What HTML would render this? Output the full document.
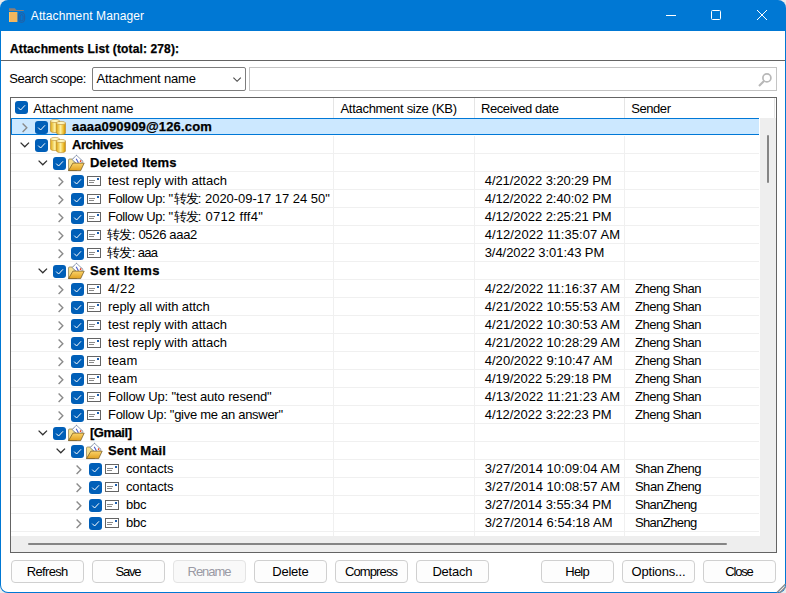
<!DOCTYPE html>
<html><head><meta charset="utf-8"><title>Attachment Manager</title>
<style>
html,body{margin:0;padding:0;width:786px;height:593px;overflow:hidden;background:#ebebeb;}
#root{position:relative;width:786px;height:593px;}
svg text{font-family:"Liberation Sans",sans-serif;}
</style></head><body><div id="root">
<div style="position:absolute;left:0;top:0;width:786px;height:593px;background:#0078d4;border-radius:8px;overflow:hidden"><div style="position:absolute;left:1px;top:31px;width:784px;height:561px;background:#fff;border-radius:0 0 7px 7px"></div></div>
<div style="position:absolute;left:11px;top:560px;width:71px;height:21px;border:1px solid #d0d0d0;border-radius:4px;background:#fdfdfd;"></div>
<div style="position:absolute;left:92px;top:560px;width:71px;height:21px;border:1px solid #d0d0d0;border-radius:4px;background:#fdfdfd;"></div>
<div style="position:absolute;left:173px;top:560px;width:71px;height:21px;border:1px solid #d0d0d0;border-radius:4px;background:#fdfdfd;background:#f9f9f9;border-color:#e4e4e4;"></div>
<div style="position:absolute;left:254px;top:560px;width:71px;height:21px;border:1px solid #d0d0d0;border-radius:4px;background:#fdfdfd;"></div>
<div style="position:absolute;left:335px;top:560px;width:71px;height:21px;border:1px solid #d0d0d0;border-radius:4px;background:#fdfdfd;"></div>
<div style="position:absolute;left:416px;top:560px;width:71px;height:21px;border:1px solid #d0d0d0;border-radius:4px;background:#fdfdfd;"></div>
<div style="position:absolute;left:541px;top:560px;width:71px;height:21px;border:1px solid #d0d0d0;border-radius:4px;background:#fdfdfd;"></div>
<div style="position:absolute;left:622px;top:560px;width:71px;height:21px;border:1px solid #d0d0d0;border-radius:4px;background:#fdfdfd;"></div>
<div style="position:absolute;left:703px;top:560px;width:71px;height:21px;border:1px solid #d0d0d0;border-radius:4px;background:#fdfdfd;"></div>
<div style="position:absolute;left:1px;top:60px;width:784px;height:1px;background:#646464"></div>
<div style="position:absolute;left:92px;top:67px;width:152px;height:22px;border:1px solid #7d7d7d;border-radius:2px;background:#fff"></div>
<div style="position:absolute;left:249px;top:67px;width:526px;height:22px;border:1px solid #c4c4c4;background:#fff"></div>
<div style="position:absolute;left:10px;top:97px;width:765px;height:454px;border:1px solid #646464;background:#fff"></div>
<div style="position:absolute;left:333px;top:98px;width:1px;height:20px;background:#e5e5e5"></div>
<div style="position:absolute;left:474px;top:98px;width:1px;height:20px;background:#e5e5e5"></div>
<div style="position:absolute;left:624px;top:98px;width:1px;height:20px;background:#e5e5e5"></div>
<div style="position:absolute;left:774px;top:98px;width:1px;height:20px;background:#e5e5e5"></div>
<div style="position:absolute;left:11px;top:153px;width:748px;height:1px;background:#f0f0f0"></div>
<div style="position:absolute;left:11px;top:171px;width:748px;height:1px;background:#f0f0f0"></div>
<div style="position:absolute;left:11px;top:189px;width:748px;height:1px;background:#f0f0f0"></div>
<div style="position:absolute;left:11px;top:207px;width:748px;height:1px;background:#f0f0f0"></div>
<div style="position:absolute;left:11px;top:225px;width:748px;height:1px;background:#f0f0f0"></div>
<div style="position:absolute;left:11px;top:243px;width:748px;height:1px;background:#f0f0f0"></div>
<div style="position:absolute;left:11px;top:261px;width:748px;height:1px;background:#f0f0f0"></div>
<div style="position:absolute;left:11px;top:279px;width:748px;height:1px;background:#f0f0f0"></div>
<div style="position:absolute;left:11px;top:297px;width:748px;height:1px;background:#f0f0f0"></div>
<div style="position:absolute;left:11px;top:315px;width:748px;height:1px;background:#f0f0f0"></div>
<div style="position:absolute;left:11px;top:333px;width:748px;height:1px;background:#f0f0f0"></div>
<div style="position:absolute;left:11px;top:351px;width:748px;height:1px;background:#f0f0f0"></div>
<div style="position:absolute;left:11px;top:369px;width:748px;height:1px;background:#f0f0f0"></div>
<div style="position:absolute;left:11px;top:387px;width:748px;height:1px;background:#f0f0f0"></div>
<div style="position:absolute;left:11px;top:405px;width:748px;height:1px;background:#f0f0f0"></div>
<div style="position:absolute;left:11px;top:423px;width:748px;height:1px;background:#f0f0f0"></div>
<div style="position:absolute;left:11px;top:441px;width:748px;height:1px;background:#f0f0f0"></div>
<div style="position:absolute;left:11px;top:459px;width:748px;height:1px;background:#f0f0f0"></div>
<div style="position:absolute;left:11px;top:477px;width:748px;height:1px;background:#f0f0f0"></div>
<div style="position:absolute;left:11px;top:495px;width:748px;height:1px;background:#f0f0f0"></div>
<div style="position:absolute;left:11px;top:513px;width:748px;height:1px;background:#f0f0f0"></div>
<div style="position:absolute;left:11px;top:531px;width:748px;height:1px;background:#f0f0f0"></div>
<div style="position:absolute;left:333px;top:136px;width:1px;height:400px;background:#f0f0f0"></div>
<div style="position:absolute;left:474px;top:136px;width:1px;height:400px;background:#f0f0f0"></div>
<div style="position:absolute;left:624px;top:136px;width:1px;height:400px;background:#f0f0f0"></div>
<div style="position:absolute;left:11px;top:118px;width:747px;height:15px;border:1px solid #0078d7;border-right:none;background:#cce8ff;border-radius:1px 0 0 1px"></div>
<div style="position:absolute;left:760px;top:118px;width:16px;height:418px;background:#eeeeee"></div>
<div style="position:absolute;left:767px;top:135px;width:2px;height:48px;background:#858585;border-radius:1px"></div>
<div style="position:absolute;left:11px;top:536px;width:765px;height:16px;background:#eeeeee"></div>
<div style="position:absolute;left:28px;top:543px;width:699px;height:2px;background:#858585;border-radius:1px"></div>
<svg width="786" height="593" viewBox="0 0 786 593" style="position:absolute;left:0;top:0">
<defs>
<symbol id="cb" viewBox="0 0 13 13" width="13" height="13" overflow="visible">
<rect x="0" y="0" width="13" height="13" rx="3" fill="#005fb8"/>
<path d="M3.2 6.6 L5.6 9 L10 4.3" fill="none" stroke="#fff" stroke-width="1"/>
</symbol>
<linearGradient id="gold" x1="0" x2="1" y1="0" y2="0">
<stop offset="0" stop-color="#e0a810"/><stop offset="0.45" stop-color="#fbeea0"/><stop offset="0.75" stop-color="#f0c030"/><stop offset="1" stop-color="#c88a00"/>
</linearGradient>
<symbol id="db" width="16" height="18" overflow="visible">
<g stroke="#b88a30" stroke-width="0.6">
<path d="M0.5 3 v10 a4.5 1.6 0 0 0 9 0 v-10 z" fill="url(#gold)"/>
<ellipse cx="5" cy="3" rx="4.5" ry="1.6" fill="#fff8c0"/>
<path d="M6.5 5 v10 a4.5 1.6 0 0 0 9 0 v-10 z" fill="url(#gold)"/>
<ellipse cx="11" cy="5" rx="4.5" ry="1.6" fill="#fff8c0"/>
</g>
</symbol>
<linearGradient id="fold" x1="0" x2="0" y1="0" y2="1">
<stop offset="0" stop-color="#fbd46a"/><stop offset="1" stop-color="#e0a020"/>
</linearGradient>
<symbol id="fo" width="18" height="18" overflow="visible">
<path d="M0.5 16.5 V6 q0 -1 1 -1 h3 l1 1 h3 v10.5 z" fill="#f6e08e" stroke="#8a7a50" stroke-width="0.7"/>
<path d="M8.4 1.2 L15.1 7.5 L10.8 11.9 L4.1 5.6 Z" fill="#fff" stroke="#2a4068" stroke-width="0.9" stroke-dasharray="1 0.6"/>
<path d="M8.2 4.8 L10.4 8.8" stroke="#4a5ac8" stroke-width="1.1"/>
<path d="M12 6.6 L13.2 7.6" stroke="#e83a18" stroke-width="1.4"/>
<path d="M4.9 9.1 H16.2 L12.7 16.6 H0.5 Z" fill="url(#fold)" stroke="#6a5020" stroke-width="0.7"/>
</symbol>
<symbol id="msg" width="14" height="10" overflow="visible">
<rect x="0.5" y="0.5" width="13" height="9" fill="#fff" stroke="#646464" stroke-width="1"/>
<path d="M2 4.5 h6 M2 6.5 h5" stroke="#8a8a8a" stroke-width="1"/>
<rect x="10" y="2" width="2" height="2" fill="#1f5fae"/>
</symbol>
</defs>
<text x="30.8" y="19.5" font-size="12" fill="#fff" textLength="113.3" lengthAdjust="spacing">Attachment Manager</text>
<g>
<path d="M9 8.2 h5.8 l1.6 1.8 h7.4 v1 h-14.8 z" fill="#8a7e76"/>
<rect x="9" y="12" width="8.4" height="10" fill="#f2b65e"/>
<rect x="9" y="12" width="1" height="10" fill="#ffc466"/>
<rect x="18.6" y="12.6" width="6" height="9.8" rx="3" fill="none" stroke="#2b5a98" stroke-width="0.9"/>
<rect x="20.1" y="14.6" width="3" height="6.2" rx="1.5" fill="none" stroke="#2b5a98" stroke-width="0.8"/>
</g>
<g stroke="#fff" stroke-width="1" fill="none"><path d="M666 15.5 h10"/><rect x="711.5" y="10.5" width="9" height="9" rx="1"/><path d="M757 10 l10 10 M767 10 l-10 10"/></g>
<text x="10" y="53" font-size="12" font-weight="bold" stroke="#000" stroke-width="0.25" textLength="169" lengthAdjust="spacing">Attachments List (total: 278):</text>
<text x="9.3" y="83" font-size="13" textLength="77" lengthAdjust="spacing">Search scope:</text>
<text x="96.5" y="83" font-size="13" textLength="99.5" lengthAdjust="spacing">Attachment name</text>
<path d="M233.4 77.6 l3.7 3.7 l3.7 -3.7" fill="none" stroke="#4a4a4a" stroke-width="1.15"/>
<g fill="none" stroke="#b8b8b8" stroke-width="1.7"><circle cx="766.9" cy="77.9" r="4"/><path d="M764 81 l-5 5" stroke-width="2.1"/></g>
<use href="#cb" x="15" y="101"/>
<text x="33.3" y="113" font-size="13" textLength="100.3" lengthAdjust="spacing">Attachment name</text>
<text x="340.5" y="113" font-size="13" textLength="116.5" lengthAdjust="spacing">Attachment size (KB)</text>
<text x="481" y="113" font-size="13" textLength="78" lengthAdjust="spacing">Received date</text>
<text x="631.3" y="113" font-size="13" textLength="39.7" lengthAdjust="spacing">Sender</text>
<path d="M22.6 123.6 l4.2 4.2 l-4.2 4.2" fill="none" stroke="#8a8a8a" stroke-width="1.4"/>
<use href="#cb" x="35" y="121"/>
<use href="#db" x="50" y="118"/>
<text x="72" y="131" font-size="13" font-weight="bold" stroke="#000" stroke-width="0.25" textLength="139.8" lengthAdjust="spacing">aaaa090909@126.com</text>
<path d="M20.6 142.6 l4.2 4.2 l4.2 -4.2" fill="none" stroke="#303030" stroke-width="1.3"/>
<use href="#cb" x="35" y="139"/>
<use href="#db" x="50" y="136"/>
<text x="72" y="149" font-size="13" font-weight="bold" stroke="#000" stroke-width="0.25" textLength="51.5" lengthAdjust="spacing">Archives</text>
<path d="M38.6 160.6 l4.2 4.2 l4.2 -4.2" fill="none" stroke="#303030" stroke-width="1.3"/>
<use href="#cb" x="53" y="157"/>
<use href="#fo" x="68" y="154"/>
<text x="90" y="167" font-size="13" font-weight="bold" stroke="#000" stroke-width="0.25" textLength="86.5" lengthAdjust="spacing">Deleted Items</text>
<path d="M58.6 177.6 l4.2 4.2 l-4.2 4.2" fill="none" stroke="#8a8a8a" stroke-width="1.4"/>
<use href="#cb" x="71" y="175"/>
<use href="#msg" x="87" y="176"/>
<text x="108" y="185" font-size="13" textLength="119" lengthAdjust="spacing">test reply with attach</text>
<text x="484.7" y="185" font-size="13" textLength="127.0" lengthAdjust="spacing">4/21/2022 3:20:29 PM</text>
<path d="M58.6 195.6 l4.2 4.2 l-4.2 4.2" fill="none" stroke="#8a8a8a" stroke-width="1.4"/>
<use href="#cb" x="71" y="193"/>
<use href="#msg" x="87" y="194"/>
<text x="108" y="203" font-size="13" textLength="65" lengthAdjust="spacing">Follow Up: "</text>
<text x="173.5" y="203" font-size="12.5" textLength="25" lengthAdjust="spacing">转发</text>
<text x="197.8" y="203" font-size="13" textLength="132" lengthAdjust="spacing">: 2020-09-17 17 24 50"</text>
<text x="484.7" y="203" font-size="13" textLength="127.0" lengthAdjust="spacing">4/12/2022 2:40:02 PM</text>
<path d="M58.6 213.6 l4.2 4.2 l-4.2 4.2" fill="none" stroke="#8a8a8a" stroke-width="1.4"/>
<use href="#cb" x="71" y="211"/>
<use href="#msg" x="87" y="212"/>
<text x="108" y="221" font-size="13" textLength="65" lengthAdjust="spacing">Follow Up: "</text>
<text x="173.5" y="221" font-size="12.5" textLength="25" lengthAdjust="spacing">转发</text>
<text x="197.8" y="221" font-size="13" textLength="65" lengthAdjust="spacing">: 0712 fff4"</text>
<text x="484.7" y="221" font-size="13" textLength="127.0" lengthAdjust="spacing">4/12/2022 2:25:21 PM</text>
<path d="M58.6 231.6 l4.2 4.2 l-4.2 4.2" fill="none" stroke="#8a8a8a" stroke-width="1.4"/>
<use href="#cb" x="71" y="229"/>
<use href="#msg" x="87" y="230"/>
<text x="107.4" y="239" font-size="12.5" textLength="25" lengthAdjust="spacing">转发</text>
<text x="131.8" y="239" font-size="13" textLength="65.5" lengthAdjust="spacing">: 0526 aaa2</text>
<text x="484.7" y="239" font-size="13" textLength="135.3" lengthAdjust="spacing">4/12/2022 11:35:07 AM</text>
<path d="M58.6 249.6 l4.2 4.2 l-4.2 4.2" fill="none" stroke="#8a8a8a" stroke-width="1.4"/>
<use href="#cb" x="71" y="247"/>
<use href="#msg" x="87" y="248"/>
<text x="107.4" y="257" font-size="12.5" textLength="25" lengthAdjust="spacing">转发</text>
<text x="131.8" y="257" font-size="13" textLength="26.3" lengthAdjust="spacing">: aaa</text>
<text x="484.7" y="257" font-size="13" textLength="119.6" lengthAdjust="spacing">3/4/2022 3:01:43 PM</text>
<path d="M38.6 268.6 l4.2 4.2 l4.2 -4.2" fill="none" stroke="#303030" stroke-width="1.3"/>
<use href="#cb" x="53" y="265"/>
<use href="#fo" x="68" y="262"/>
<text x="90" y="275" font-size="13" font-weight="bold" stroke="#000" stroke-width="0.25" textLength="69.4" lengthAdjust="spacing">Sent Items</text>
<path d="M58.6 285.6 l4.2 4.2 l-4.2 4.2" fill="none" stroke="#8a8a8a" stroke-width="1.4"/>
<use href="#cb" x="71" y="283"/>
<use href="#msg" x="87" y="284"/>
<text x="108" y="293" font-size="13" textLength="27" lengthAdjust="spacing">4/22</text>
<text x="484.7" y="293" font-size="13" textLength="135.3" lengthAdjust="spacing">4/22/2022 11:16:37 AM</text>
<text x="634.9" y="293" font-size="13" textLength="66.7" lengthAdjust="spacing">Zheng Shan</text>
<path d="M58.6 303.6 l4.2 4.2 l-4.2 4.2" fill="none" stroke="#8a8a8a" stroke-width="1.4"/>
<use href="#cb" x="71" y="301"/>
<use href="#msg" x="87" y="302"/>
<text x="108" y="311" font-size="13" textLength="101.7" lengthAdjust="spacing">reply all with attch</text>
<text x="484.7" y="311" font-size="13" textLength="135.3" lengthAdjust="spacing">4/21/2022 10:55:53 AM</text>
<text x="634.9" y="311" font-size="13" textLength="66.7" lengthAdjust="spacing">Zheng Shan</text>
<path d="M58.6 321.6 l4.2 4.2 l-4.2 4.2" fill="none" stroke="#8a8a8a" stroke-width="1.4"/>
<use href="#cb" x="71" y="319"/>
<use href="#msg" x="87" y="320"/>
<text x="108" y="329" font-size="13" textLength="119" lengthAdjust="spacing">test reply with attach</text>
<text x="484.7" y="329" font-size="13" textLength="135.3" lengthAdjust="spacing">4/21/2022 10:30:53 AM</text>
<text x="634.9" y="329" font-size="13" textLength="66.7" lengthAdjust="spacing">Zheng Shan</text>
<path d="M58.6 339.6 l4.2 4.2 l-4.2 4.2" fill="none" stroke="#8a8a8a" stroke-width="1.4"/>
<use href="#cb" x="71" y="337"/>
<use href="#msg" x="87" y="338"/>
<text x="108" y="347" font-size="13" textLength="119" lengthAdjust="spacing">test reply with attach</text>
<text x="484.7" y="347" font-size="13" textLength="135.3" lengthAdjust="spacing">4/21/2022 10:28:29 AM</text>
<text x="634.9" y="347" font-size="13" textLength="66.7" lengthAdjust="spacing">Zheng Shan</text>
<path d="M58.6 357.6 l4.2 4.2 l-4.2 4.2" fill="none" stroke="#8a8a8a" stroke-width="1.4"/>
<use href="#cb" x="71" y="355"/>
<use href="#msg" x="87" y="356"/>
<text x="108" y="365" font-size="13" textLength="29.3" lengthAdjust="spacing">team</text>
<text x="484.7" y="365" font-size="13" textLength="127.9" lengthAdjust="spacing">4/20/2022 9:10:47 AM</text>
<text x="634.9" y="365" font-size="13" textLength="66.7" lengthAdjust="spacing">Zheng Shan</text>
<path d="M58.6 375.6 l4.2 4.2 l-4.2 4.2" fill="none" stroke="#8a8a8a" stroke-width="1.4"/>
<use href="#cb" x="71" y="373"/>
<use href="#msg" x="87" y="374"/>
<text x="108" y="383" font-size="13" textLength="29.3" lengthAdjust="spacing">team</text>
<text x="484.7" y="383" font-size="13" textLength="127.0" lengthAdjust="spacing">4/19/2022 5:29:18 PM</text>
<text x="634.9" y="383" font-size="13" textLength="66.7" lengthAdjust="spacing">Zheng Shan</text>
<path d="M58.6 393.6 l4.2 4.2 l-4.2 4.2" fill="none" stroke="#8a8a8a" stroke-width="1.4"/>
<use href="#cb" x="71" y="391"/>
<use href="#msg" x="87" y="392"/>
<text x="108" y="401" font-size="13" textLength="163.7" lengthAdjust="spacing">Follow Up: "test auto resend"</text>
<text x="484.7" y="401" font-size="13" textLength="135.3" lengthAdjust="spacing">4/13/2022 11:21:23 AM</text>
<text x="634.9" y="401" font-size="13" textLength="66.7" lengthAdjust="spacing">Zheng Shan</text>
<path d="M58.6 411.6 l4.2 4.2 l-4.2 4.2" fill="none" stroke="#8a8a8a" stroke-width="1.4"/>
<use href="#cb" x="71" y="409"/>
<use href="#msg" x="87" y="410"/>
<text x="108" y="419" font-size="13" textLength="175" lengthAdjust="spacing">Follow Up: "give me an answer"</text>
<text x="484.7" y="419" font-size="13" textLength="127.0" lengthAdjust="spacing">4/12/2022 3:22:23 PM</text>
<text x="634.9" y="419" font-size="13" textLength="66.7" lengthAdjust="spacing">Zheng Shan</text>
<path d="M38.6 430.6 l4.2 4.2 l4.2 -4.2" fill="none" stroke="#303030" stroke-width="1.3"/>
<use href="#cb" x="53" y="427"/>
<use href="#fo" x="68" y="424"/>
<text x="90" y="437" font-size="13" font-weight="bold" stroke="#000" stroke-width="0.25" textLength="42" lengthAdjust="spacing">[Gmail]</text>
<path d="M56.6 448.6 l4.2 4.2 l4.2 -4.2" fill="none" stroke="#303030" stroke-width="1.3"/>
<use href="#cb" x="71" y="445"/>
<use href="#fo" x="86" y="442"/>
<text x="108" y="455" font-size="13" font-weight="bold" stroke="#000" stroke-width="0.25" textLength="57.8" lengthAdjust="spacing">Sent Mail</text>
<path d="M76.6 465.6 l4.2 4.2 l-4.2 4.2" fill="none" stroke="#8a8a8a" stroke-width="1.4"/>
<use href="#cb" x="89" y="463"/>
<use href="#msg" x="105" y="464"/>
<text x="126" y="473" font-size="13" textLength="47.5" lengthAdjust="spacing">contacts</text>
<text x="484.7" y="473" font-size="13" textLength="135.3" lengthAdjust="spacing">3/27/2014 10:09:04 AM</text>
<text x="634.9" y="473" font-size="13" textLength="66.7" lengthAdjust="spacing">Shan Zheng</text>
<path d="M76.6 483.6 l4.2 4.2 l-4.2 4.2" fill="none" stroke="#8a8a8a" stroke-width="1.4"/>
<use href="#cb" x="89" y="481"/>
<use href="#msg" x="105" y="482"/>
<text x="126" y="491" font-size="13" textLength="47.5" lengthAdjust="spacing">contacts</text>
<text x="484.7" y="491" font-size="13" textLength="135.3" lengthAdjust="spacing">3/27/2014 10:08:57 AM</text>
<text x="634.9" y="491" font-size="13" textLength="66.7" lengthAdjust="spacing">Shan Zheng</text>
<path d="M76.6 501.6 l4.2 4.2 l-4.2 4.2" fill="none" stroke="#8a8a8a" stroke-width="1.4"/>
<use href="#cb" x="89" y="499"/>
<use href="#msg" x="105" y="500"/>
<text x="126" y="509" font-size="13" textLength="20.5" lengthAdjust="spacing">bbc</text>
<text x="484.7" y="509" font-size="13" textLength="127.0" lengthAdjust="spacing">3/27/2014 3:55:34 PM</text>
<text x="634.9" y="509" font-size="13" textLength="62.4" lengthAdjust="spacing">ShanZheng</text>
<path d="M76.6 519.6 l4.2 4.2 l-4.2 4.2" fill="none" stroke="#8a8a8a" stroke-width="1.4"/>
<use href="#cb" x="89" y="517"/>
<use href="#msg" x="105" y="518"/>
<text x="126" y="527" font-size="13" textLength="20.5" lengthAdjust="spacing">bbc</text>
<text x="484.7" y="527" font-size="13" textLength="127.9" lengthAdjust="spacing">3/27/2014 6:54:18 AM</text>
<text x="634.9" y="527" font-size="13" textLength="62.4" lengthAdjust="spacing">ShanZheng</text>
<text x="26.65" y="576" font-size="13" textLength="41.7" lengthAdjust="spacing">Refresh</text>
<text x="115.4" y="576" font-size="13" textLength="26.2" lengthAdjust="spacing">Save</text>
<text x="187.6" y="576" font-size="13" fill="#9a9aa4" textLength="43.8" lengthAdjust="spacing">Rename</text>
<text x="272.3" y="576" font-size="13" textLength="36.4" lengthAdjust="spacing">Delete</text>
<text x="345.0" y="576" font-size="13" textLength="53" lengthAdjust="spacing">Compress</text>
<text x="432.4" y="576" font-size="13" textLength="40.2" lengthAdjust="spacing">Detach</text>
<text x="565.3" y="576" font-size="13" textLength="24.4" lengthAdjust="spacing">Help</text>
<text x="631.5" y="576" font-size="13" textLength="54" lengthAdjust="spacing">Options...</text>
<text x="725.15" y="576" font-size="13" textLength="28.7" lengthAdjust="spacing">Close</text>
<path d="M777 592.5 L785.5 584 M780 592.5 L785.5 587" stroke="#8c8c8c" stroke-width="1.3"/>
</svg>
</div></body></html>
